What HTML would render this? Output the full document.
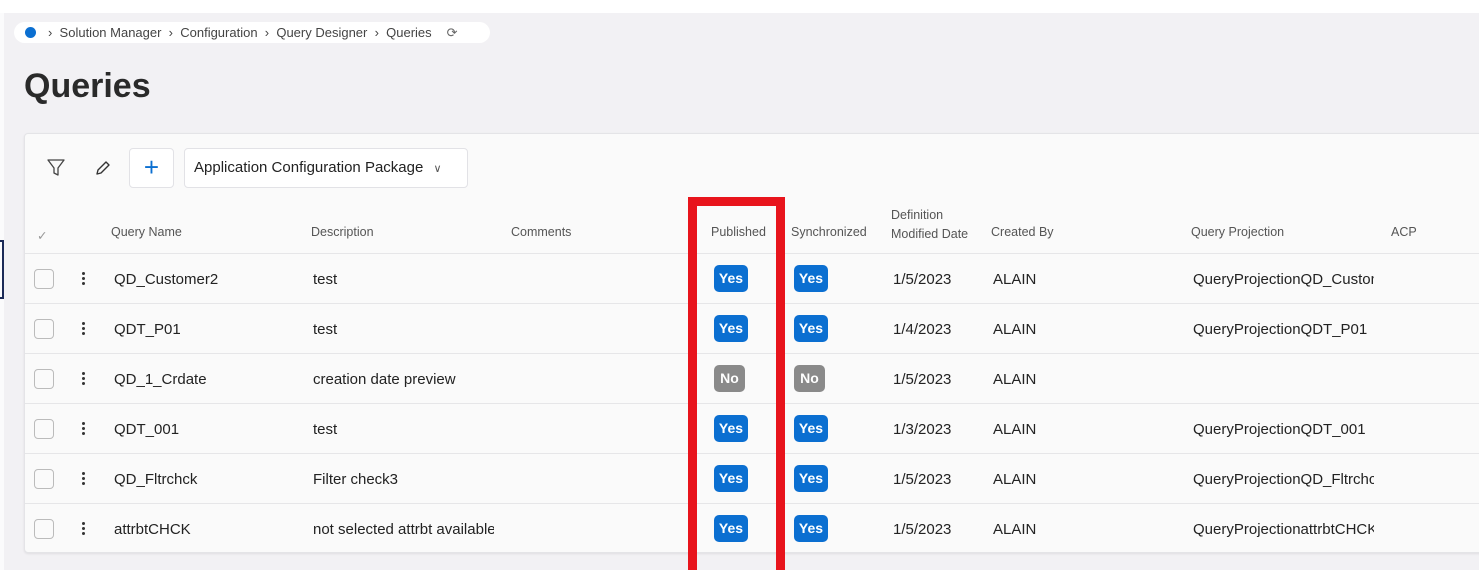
<!DOCTYPE html>
<html style="overflow:hidden;height:570px"><head><meta charset="utf-8"><style>
*{margin:0;padding:0;box-sizing:border-box}
body{width:1479px;height:570px;overflow:hidden;background:#f2f1f4;font-family:"Liberation Sans",sans-serif;color:#222;position:relative}
.a{position:absolute;white-space:nowrap}
.top{left:0;top:0;width:1479px;height:13px;background:#fff}
.lstrip{left:0;top:13px;width:4px;height:557px;background:#fbfbfc}
.crumb{left:14px;top:22px;width:476px;height:21px;background:#fff;border-radius:11px;font-size:13px;color:#444;line-height:21px}
.card{left:24px;top:133px;width:1470px;height:420px;background:#fafafa;border:1px solid #e4e4e7;border-radius:4px;box-shadow:0 1px 2px rgba(0,0,0,.08)}
.hd{font-size:12.5px;color:#555}
.c{font-size:15px;color:#222}
.line{left:25px;width:1454px;height:1px;background:#e6e6e8}
.cb{width:20px;height:20px;border:1px solid #bbb;border-radius:4px;background:#fafafa;left:34px}
.dots{left:82px;width:4px}
.dots i{display:block;width:3px;height:3px;background:#333;border-radius:50%;margin-bottom:2px}
.bd{height:27px;border-radius:5px;color:#fff;font-weight:bold;font-size:14px;line-height:27px;text-align:center}
.y{background:#0b6fd1;width:34px}
.n{background:#8a8a8a;width:31px}
.clip{overflow:hidden}
</style></head><body>
<div class="a top"></div>
<div class="a lstrip"></div>
<div class="a" style="left:0;top:240px;width:4px;height:59px;border:2px solid #1b2a57;border-left:none"></div>
<div class="a crumb"><span style="display:inline-block;width:11px;height:11px;background:#0b6fd1;border-radius:50%;margin:0 0 0 11px;vertical-align:-1px"></span><span style="margin-left:12px">›&nbsp; Solution Manager &nbsp;›&nbsp; Configuration &nbsp;›&nbsp; Query Designer &nbsp;›&nbsp; Queries</span><span style="margin-left:15px;color:#666">⟳</span></div>
<div class="a" style="left:24px;top:67px;font-size:34px;font-weight:bold;color:#2a2a2a">Queries</div>
<div class="a card"></div>
<svg class="a" style="left:46px;top:158px" width="20" height="20" viewBox="0 0 20 20"><path d="M2 2h16l-6 8v7l-4-2v-5z" fill="none" stroke="#444" stroke-width="1.3" stroke-linejoin="round"/></svg>
<svg class="a" style="left:94px;top:159px" width="18" height="18" viewBox="0 0 18 18"><path d="M3 15l1-4 8-8 3 3-8 8z" fill="none" stroke="#333" stroke-width="1.4" stroke-linejoin="round"/></svg>
<div class="a" style="left:129px;top:148px;width:45px;height:40px;background:#fff;border:1px solid #e2e2e6;border-radius:4px;color:#0b6fd1;font-size:26px;text-align:center;line-height:37px;font-weight:300">+</div>
<div class="a" style="left:184px;top:148px;width:284px;height:40px;background:#fff;border:1px solid #e2e2e6;border-radius:4px;font-size:15px;line-height:38px;padding-left:9px;color:#222">Application Configuration Package <span style="font-size:11px;color:#555;margin-left:6px">∨</span></div>
<div class="a hd" style="left:37px;top:228px;color:#999">✓</div>
<div class="a hd" style="left:111px;top:225px">Query Name</div>
<div class="a hd" style="left:311px;top:225px">Description</div>
<div class="a hd" style="left:511px;top:225px">Comments</div>
<div class="a hd" style="left:711px;top:225px">Published</div>
<div class="a hd" style="left:791px;top:225px">Synchronized</div>
<div class="a hd" style="left:891px;top:206px;line-height:19px">Definition<br>Modified Date</div>
<div class="a hd" style="left:991px;top:225px">Created By</div>
<div class="a hd" style="left:1191px;top:225px">Query Projection</div>
<div class="a hd" style="left:1391px;top:225px">ACP</div>
<div class="a line" style="top:253px"></div>
<div class="a line" style="top:303px"></div>
<div class="a line" style="top:353px"></div>
<div class="a line" style="top:403px"></div>
<div class="a line" style="top:453px"></div>
<div class="a line" style="top:503px"></div>

<div class="a cb" style="top:269px"></div><div class="a dots" style="top:272px"><i></i><i></i><i></i></div>
<div class="a c" style="left:114px;top:271px">QD_Customer2</div><div class="a c" style="left:313px;top:271px">test</div>
<div class="a bd y" style="left:714px;top:265px">Yes</div><div class="a bd y" style="left:794px;top:265px">Yes</div>
<div class="a c" style="left:893px;top:271px">1/5/2023</div><div class="a c" style="left:993px;top:271px">ALAIN</div>
<div class="a c clip" style="left:1193px;top:271px;width:181px">QueryProjectionQD_Customer2</div>

<div class="a cb" style="top:319px"></div><div class="a dots" style="top:322px"><i></i><i></i><i></i></div>
<div class="a c" style="left:114px;top:321px">QDT_P01</div><div class="a c" style="left:313px;top:321px">test</div>
<div class="a bd y" style="left:714px;top:315px">Yes</div><div class="a bd y" style="left:794px;top:315px">Yes</div>
<div class="a c" style="left:893px;top:321px">1/4/2023</div><div class="a c" style="left:993px;top:321px">ALAIN</div>
<div class="a c clip" style="left:1193px;top:321px;width:181px">QueryProjectionQDT_P01</div>

<div class="a cb" style="top:369px"></div><div class="a dots" style="top:372px"><i></i><i></i><i></i></div>
<div class="a c" style="left:114px;top:371px">QD_1_Crdate</div><div class="a c" style="left:313px;top:371px">creation date preview</div>
<div class="a bd n" style="left:714px;top:365px">No</div><div class="a bd n" style="left:794px;top:365px">No</div>
<div class="a c" style="left:893px;top:371px">1/5/2023</div><div class="a c" style="left:993px;top:371px">ALAIN</div>

<div class="a cb" style="top:419px"></div><div class="a dots" style="top:422px"><i></i><i></i><i></i></div>
<div class="a c" style="left:114px;top:421px">QDT_001</div><div class="a c" style="left:313px;top:421px">test</div>
<div class="a bd y" style="left:714px;top:415px">Yes</div><div class="a bd y" style="left:794px;top:415px">Yes</div>
<div class="a c" style="left:893px;top:421px">1/3/2023</div><div class="a c" style="left:993px;top:421px">ALAIN</div>
<div class="a c clip" style="left:1193px;top:421px;width:181px">QueryProjectionQDT_001</div>

<div class="a cb" style="top:469px"></div><div class="a dots" style="top:472px"><i></i><i></i><i></i></div>
<div class="a c" style="left:114px;top:471px">QD_Fltrchck</div><div class="a c" style="left:313px;top:471px">Filter check3</div>
<div class="a bd y" style="left:714px;top:465px">Yes</div><div class="a bd y" style="left:794px;top:465px">Yes</div>
<div class="a c" style="left:893px;top:471px">1/5/2023</div><div class="a c" style="left:993px;top:471px">ALAIN</div>
<div class="a c clip" style="left:1193px;top:471px;width:181px">QueryProjectionQD_Fltrchck</div>

<div class="a cb" style="top:519px"></div><div class="a dots" style="top:522px"><i></i><i></i><i></i></div>
<div class="a c" style="left:114px;top:521px">attrbtCHCK</div><div class="a c clip" style="left:313px;top:521px;width:181px">not selected attrbt available</div>
<div class="a bd y" style="left:714px;top:515px">Yes</div><div class="a bd y" style="left:794px;top:515px">Yes</div>
<div class="a c" style="left:893px;top:521px">1/5/2023</div><div class="a c" style="left:993px;top:521px">ALAIN</div>
<div class="a c clip" style="left:1193px;top:521px;width:181px">QueryProjectionattrbtCHCK</div>

<div class="a" style="left:688px;top:197px;width:97px;height:373px;border:9px solid #e8141c;border-bottom:none"></div>
</body></html>
